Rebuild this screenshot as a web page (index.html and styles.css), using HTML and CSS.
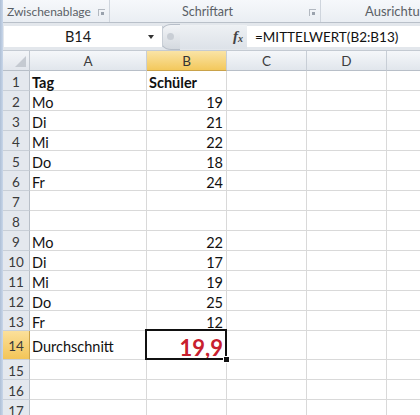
FILE: index.html
```html
<!DOCTYPE html>
<html>
<head>
<meta charset="utf-8">
<link rel="stylesheet" href="styles.css">
</head>
<body>
<div class="window">
  <div class="frame-edge"></div>
  <div class="main">
    <div class="ribbon">
      <div class="group g1"><span class="glabel">Zwischenablage</span><span class="launcher"></span></div>
      <div class="group g2"><span class="glabel">Schriftart</span><span class="launcher"></span></div>
      <div class="group g3"><span class="glabel">Ausrichtung</span></div>
    </div>
    <div class="fbar">
      <div class="namebox"><span class="nbtext">B14</span><span class="ddarrow"></span></div>
      <div class="splitter"><span class="knob"></span></div>
      <div class="fxbox"><span class="fx">f<sub>x</sub></span></div>
      <div class="finput">=MITTELWERT(B2:B13)</div>
    </div>
    <div class="grid">
      <div class="corner"><span class="tri"></span></div>
      <div class="ch">A</div><div class="ch sel">B</div><div class="ch">C</div><div class="ch">D</div><div class="ch last"></div>

      <div class="rh">1</div><div class="c b">Tag</div><div class="c b">Schüler</div><div class="c"></div><div class="c"></div><div class="c"></div>
      <div class="rh">2</div><div class="c">Mo</div><div class="c n">19</div><div class="c"></div><div class="c"></div><div class="c"></div>
      <div class="rh">3</div><div class="c">Di</div><div class="c n">21</div><div class="c"></div><div class="c"></div><div class="c"></div>
      <div class="rh">4</div><div class="c">Mi</div><div class="c n">22</div><div class="c"></div><div class="c"></div><div class="c"></div>
      <div class="rh">5</div><div class="c">Do</div><div class="c n">18</div><div class="c"></div><div class="c"></div><div class="c"></div>
      <div class="rh">6</div><div class="c">Fr</div><div class="c n">24</div><div class="c"></div><div class="c"></div><div class="c"></div>
      <div class="rh">7</div><div class="c"></div><div class="c"></div><div class="c"></div><div class="c"></div><div class="c"></div>
      <div class="rh">8</div><div class="c"></div><div class="c"></div><div class="c"></div><div class="c"></div><div class="c"></div>
      <div class="rh">9</div><div class="c">Mo</div><div class="c n">22</div><div class="c"></div><div class="c"></div><div class="c"></div>
      <div class="rh">10</div><div class="c">Di</div><div class="c n">17</div><div class="c"></div><div class="c"></div><div class="c"></div>
      <div class="rh">11</div><div class="c">Mi</div><div class="c n">19</div><div class="c"></div><div class="c"></div><div class="c"></div>
      <div class="rh">12</div><div class="c">Do</div><div class="c n">25</div><div class="c"></div><div class="c"></div><div class="c"></div>
      <div class="rh">13</div><div class="c">Fr</div><div class="c n">12</div><div class="c"></div><div class="c"></div><div class="c"></div>
      <div class="rh sel">14</div><div class="c">Durchschnitt</div><div class="c n active"><span class="big">19,9</span></div><div class="c"></div><div class="c"></div><div class="c"></div>
      <div class="rh">15</div><div class="c"></div><div class="c"></div><div class="c"></div><div class="c"></div><div class="c"></div>
      <div class="rh">16</div><div class="c"></div><div class="c"></div><div class="c"></div><div class="c"></div><div class="c"></div>
      <div class="rh">17</div><div class="c"></div><div class="c"></div><div class="c"></div><div class="c"></div><div class="c"></div>
    </div>
  </div>
</div>
</body>
</html>
```

FILE: styles.css
```css
html, body {
  margin: 0;
  padding: 0;
  width: 420px;
  height: 415px;
  overflow: hidden;
  background: #ffffff;
  font-family: Lato, "Open Sans", sans-serif;
}

.window {
  display: flex;
  width: 420px;
  height: 415px;
}

.frame-edge {
  width: 3px;
  flex: none;
  background: linear-gradient(90deg, #aebfd6, #c9d7ea);
}

.main {
  flex: 1;
  display: flex;
  flex-direction: column;
  min-width: 0;
}

.ribbon {
  height: 22px;
  display: flex;
  background: linear-gradient(#f6f8fb, #eaeef3);
  border-bottom: 1px solid #b9c0c9;
  flex: none;
}

.group {
  display: flex;
  align-items: center;
  border-right: 1px solid #cfd5dd;
  position: relative;
  font-size: 12.5px;
  color: #5a5f66;
  white-space: nowrap;
  overflow: hidden;
}

.g1 { width: 107px; padding-left: 4px; box-sizing: border-box; font-size: 12px; }
.g2 { width: 211px; padding-left: 72px; box-sizing: border-box; }
.g3 { flex: 1; border-right: none; padding-left: 44px; font-size: 13px; }

.launcher {
  position: absolute;
  right: 4px;
  top: 9px;
  width: 6px;
  height: 6px;
  border: 1px solid #b3b9c1;
  border-width: 1px 0 0 1px;
}
.launcher::after {
  content: "";
  position: absolute;
  left: 2px;
  top: 2px;
  width: 3px;
  height: 3px;
  background: #9aa2ad;
}

.fbar {
  height: 28px;
  flex: none;
  display: flex;
  align-items: center;
  background: #e3e7ec;
  border-bottom: 1px solid #c4cad2;
  box-sizing: border-box;
}

.namebox {
  width: 158px;
  height: 21px;
  background: #ffffff;
  border-right: 1px solid #c8ced6;
  position: relative;
  margin-left: 1px;
  font-size: 14.5px;
  color: #1a1a1a;
}

.nbtext {
  position: absolute;
  left: 61px;
  top: 2px;
}

.ddarrow {
  position: absolute;
  right: 8px;
  top: 9px;
  width: 0;
  height: 0;
  border-left: 3px solid transparent;
  border-right: 3px solid transparent;
  border-top: 4px solid #333;
}

.splitter {
  width: 20px;
  height: 24px;
  display: flex;
  align-items: center;
  justify-content: center;
  margin-left: -4px;
  border-radius: 12px 0 0 12px;
  background: linear-gradient(#f2f4f7, #d4d9df);
  border: 1px solid #b7bec8;
  border-right: none;
}

.knob {
  width: 7px;
  height: 7px;
  border-radius: 50%;
  background: #c9ced5;
}

.fxbox {
  width: 67px;
  height: 24px;
  display: flex;
  align-items: center;
  justify-content: flex-end;
  padding-right: 4px;
  box-sizing: border-box;
  background: linear-gradient(#eef1f4, #dde2e8);
}

.fx {
  font-family: "Liberation Serif", serif;
  font-style: italic;
  font-weight: bold;
  font-size: 15px;
  color: #444;
}
.fx sub {
  font-size: 10px;
  vertical-align: -1px;
}

.finput {
  flex: 1;
  height: 21px;
  background: #ffffff;
  font-size: 13.5px;
  color: #111;
  padding-left: 8px;
  line-height: 22px;
  white-space: nowrap;
  overflow: hidden;
}

.grid {
  display: grid;
  grid-template-columns: 27px 117px 80px 80px 80px 40px;
  grid-template-rows: repeat(14, 20px) 29px repeat(3, 20px);
  flex: none;
}

.corner {
  background: linear-gradient(#f3f5f8, #e2e6ec);
  border-right: 1px solid #c2c8d0;
  border-bottom: 1px solid #b8bfc8;
  box-sizing: border-box;
  position: relative;
}

.tri {
  position: absolute;
  right: 3px;
  bottom: 3px;
  width: 0;
  height: 0;
  border-left: 11px solid transparent;
  border-bottom: 11px solid #c5cad1;
}

.ch {
  background: linear-gradient(#f5f7fa, #e1e6ec);
  border-right: 1px solid #c8ced6;
  border-bottom: 1px solid #b8bfc8;
  box-sizing: border-box;
  font-size: 13.5px;
  color: #3c3c3c;
  display: flex;
  align-items: center;
  justify-content: center;
}

.ch.sel {
  background: linear-gradient(#fae4a6, #f3c85c);
  border-bottom-color: #c9a24a;
  color: #333;
}

.ch.last { border-right: none; }

.rh {
  background: #e4e8ee;
  border-right: 1px solid #b8bfc8;
  border-bottom: 1px solid #c9cfd7;
  box-sizing: border-box;
  font-size: 13.5px;
  color: #3a3a3a;
  display: flex;
  align-items: center;
  justify-content: center;
  padding-top: 2px;
}

.rh.sel {
  background: linear-gradient(#fbe09b, #f3c558);
  border-right-color: #c9a24a;
}

.c {
  border-right: 1px solid #d9d9d9;
  border-bottom: 1px solid #d9d9d9;
  box-sizing: border-box;
  font-size: 14.5px;
  color: #111;
  padding: 3px 3px 0 2px;
  white-space: nowrap;
  display: flex;
  align-items: center;
}

.c.b { font-weight: bold; }
.c.n { justify-content: flex-end; padding-right: 3px; }

.active { position: relative; }

.active::after {
  content: "";
  position: absolute;
  left: -2px;
  top: -2px;
  right: -1px;
  bottom: -1px;
  border: 2px solid #111;
  pointer-events: none;
}

.active::before {
  content: "";
  position: absolute;
  right: -4px;
  bottom: -4px;
  width: 5px;
  height: 5px;
  background: #111;
  border: 1px solid #fff;
  z-index: 2;
}

.big {
  font-size: 22px;
  font-weight: bold;
  color: #c8202e;
  padding-top: 1px;
}
```
